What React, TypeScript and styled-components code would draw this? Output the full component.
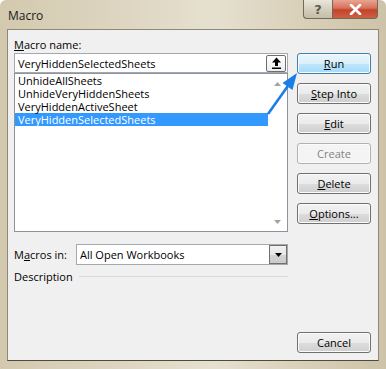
import styled, { createGlobalStyle, css } from "styled-components";

const GlobalStyle = createGlobalStyle`
  html, body {
    margin: 0;
    padding: 0;
    background: #ffffff;
  }
  body {
    font-family: "Open Sans", "Noto Sans", sans-serif;
    font-size: 11px;
    color: #000;
  }
`;

const macros = [
  "UnhideAllSheets",
  "UnhideVeryHiddenSheets",
  "VeryHiddenActiveSheet",
  "VeryHiddenSelectedSheets",
];

const buttons = [
  { label: "Run", key: "R", primary: true },
  { label: "Step Into", key: "S" },
  { label: "Edit", key: "E" },
  { label: "Create", disabled: true },
  { label: "Delete", key: "D" },
  { label: "Options...", key: "O" },
];

function Mnemonic({ text, mark }: { text: string; mark?: string }) {
  if (!mark) return <>{text}</>;
  const i = text.indexOf(mark);
  return (
    <>
      {text.slice(0, i)}
      <u>{text[i]}</u>
      {text.slice(i + 1)}
    </>
  );
}

function App() {
  return (
    <>
      <GlobalStyle />
      <Window>
        <TitleBar>
          <Title>Macro</Title>
          <Controls>
            <HelpButton>?</HelpButton>
            <CloseButton>
              <svg width="13" height="11" viewBox="0 0 13 11">
                <path d="M2 1 L11 10 M11 1 L2 10" stroke="#fff" strokeWidth="2.6" strokeLinecap="round" />
              </svg>
            </CloseButton>
          </Controls>
        </TitleBar>
        <Client>
          <LeftCol>
            <Label>
              <Mnemonic text="Macro name:" mark="M" />
            </Label>
            <NameInput>
              <span>VeryHiddenSelectedSheets</span>
              <CollapseButton>
                <svg width="11" height="12" viewBox="0 0 11 12">
                  <path d="M5.5 0.5 L10 5.5 H7 V9 H4 V5.5 H1 Z" fill="#000" />
                  <rect x="1" y="10.5" width="9" height="1.5" fill="#000" />
                </svg>
              </CollapseButton>
            </NameInput>
            <ListBox>
              <Items>
                {macros.map((m, i) => (
                  <Item key={m} selected={i === macros.length - 1}>
                    {m}
                  </Item>
                ))}
              </Items>
              <ScrollTrack>
                <svg width="7" height="4" viewBox="0 0 7 4">
                  <path d="M0 4 L3.5 0 L7 4 Z" fill="#a3a3a3" />
                </svg>
                <svg width="7" height="4" viewBox="0 0 7 4">
                  <path d="M0 0 L3.5 4 L7 0 Z" fill="#a3a3a3" />
                </svg>
              </ScrollTrack>
            </ListBox>
            <MacrosRow>
              <Label>
                <Mnemonic text="Macros in:" mark="a" />
              </Label>
              <Combo>
                <span>All Open Workbooks</span>
                <DropButton>
                  <svg width="7" height="4" viewBox="0 0 7 4">
                    <path d="M0 0 L3.5 4 L7 0 Z" fill="#000" />
                  </svg>
                </DropButton>
              </Combo>
            </MacrosRow>
            <DescriptionRow>
              <Label>Description</Label>
              <Rule />
            </DescriptionRow>
          </LeftCol>
          <RightCol>
            {buttons.map((b) => (
              <Button key={b.label} primary={b.primary} disabled={b.disabled}>
                <Mnemonic text={b.label} mark={b.key} />
              </Button>
            ))}
            <Button style={{ marginTop: "auto" }}>Cancel</Button>
          </RightCol>
        </Client>
        <Pointer width="386" height="369" viewBox="0 0 386 369">
          <path d="M268 114 L290 83" stroke="#1b7ee6" strokeWidth="2.6" />
          <path d="M297 73 L292.5 90 L282.5 83 Z" fill="#1b7ee6" />
        </Pointer>
      </Window>
    </>
  );
}

export default App;

const Window = styled.div`
  position: relative;
  width: 386px;
  height: 369px;
  box-sizing: border-box;
  display: flex;
  flex-direction: column;
  background: linear-gradient(90deg, #d2c9ae 0%, #ddd5c0 30%, #e6e0d0 55%, #d8cfb7 80%, #cdc3a8 100%);
  border-radius: 6px 6px 0 0;
  padding: 0 7px 8px 7px;
`;

const TitleBar = styled.div`
  height: 29px;
  display: flex;
  align-items: flex-start;
  justify-content: space-between;
  margin: 0 1px 0 1px;
`;

const Title = styled.div`
  font-family: "Open Sans", "Noto Sans", sans-serif;
  font-size: 12px;
  color: #1a1a1a;
  padding-top: 7px;
`;

const Controls = styled.div`
  display: flex;
`;

const ctrlBase = css`
  height: 19px;
  box-sizing: border-box;
  display: flex;
  align-items: center;
  justify-content: center;
  border: 1px solid #6f6a5c;
  border-top: none;
`;

const HelpButton = styled.div`
  ${ctrlBase};
  width: 29px;
  border-radius: 0 0 0 4px;
  border-right: none;
  background: linear-gradient(180deg, #ebe6da 0%, #d6cfbe 50%, #c5bda8 100%);
  color: #5d5a52;
  font-family: "DejaVu Sans", sans-serif;
  font-weight: bold;
  font-size: 13px;
`;

const CloseButton = styled.div`
  ${ctrlBase};
  width: 46px;
  border-radius: 0 0 4px 0;
  background: linear-gradient(180deg, #e8a592 0%, #d8715a 45%, #c3432a 55%, #cf5f44 100%);
`;

const Client = styled.div`
  flex: 1;
  display: flex;
  gap: 9px;
  background: #f0f0f0;
  border: 1px solid #8e8879;
  border-bottom-color: #4f4a40;
  padding: 7px 6px 7px 6px;
`;

const LeftCol = styled.div`
  width: 274px;
  display: flex;
  flex-direction: column;
`;

const Label = styled.div`
  line-height: 15px;
  white-space: nowrap;
  u {
    text-decoration-thickness: 1px;
  }
`;

const fieldBorder = css`
  box-sizing: border-box;
  border: 1px solid #a4a9b0;
  background: #fff;
`;

const NameInput = styled.div`
  ${fieldBorder};
  margin-top: 1px;
  height: 20px;
  display: flex;
  align-items: center;
  justify-content: space-between;
  padding: 0 1px 0 3px;
`;

const CollapseButton = styled.div`
  width: 20px;
  height: 17px;
  box-sizing: border-box;
  border: 1px solid #6e6e6e;
  border-radius: 2px;
  background: linear-gradient(180deg, #ffffff, #ececec);
  display: flex;
  align-items: center;
  justify-content: center;
`;

const ListBox = styled.div`
  ${fieldBorder};
  border-color: #8e949b;
  height: 159px;
  display: flex;
`;

const Items = styled.div`
  flex: 1;
`;

const Item = styled.div<{ selected?: boolean }>`
  height: 13px;
  line-height: 13px;
  padding-left: 3px;
  white-space: nowrap;
  background: ${(p) => (p.selected ? "#3399ff" : "transparent")};
  color: ${(p) => (p.selected ? "#fff" : "#000")};
`;

const ScrollTrack = styled.div`
  width: 19px;
  display: flex;
  flex-direction: column;
  align-items: center;
  justify-content: space-between;
  padding: 8px 0 7px 0;
`;

const MacrosRow = styled.div`
  margin-top: 12px;
  display: flex;
  align-items: center;
  justify-content: space-between;
`;

const Combo = styled.div`
  ${fieldBorder};
  width: 212px;
  height: 21px;
  display: flex;
  align-items: center;
  justify-content: space-between;
  padding: 0 0 0 3px;
`;

const DropButton = styled.div`
  width: 18px;
  height: 19px;
  box-sizing: border-box;
  border: 1px solid #707070;
  background: linear-gradient(180deg, #f2f2f2 0%, #e6e6e6 50%, #d5d5d5 51%, #cacaca 100%);
  display: flex;
  align-items: center;
  justify-content: center;
`;

const DescriptionRow = styled.div`
  margin-top: 4px;
  display: flex;
  align-items: center;
  gap: 6px;
`;

const Rule = styled.div`
  flex: 1;
  height: 1px;
  background: #d5dbe0;
  margin-top: -1px;
`;

const RightCol = styled.div`
  width: 74px;
  display: flex;
  flex-direction: column;
  gap: 9px;
  padding-top: 16px;
`;

const Button = styled.div<{ primary?: boolean; disabled?: boolean }>`
  height: 21px;
  box-sizing: border-box;
  display: flex;
  align-items: center;
  justify-content: center;
  border: 1px solid #707070;
  border-radius: 3px;
  box-shadow: inset 0 0 0 1px #fbfbfb;
  background: linear-gradient(180deg, #f2f2f2 0%, #ebebeb 50%, #dddddd 51%, #cfcfcf 100%);
  color: #000;
  ${(p) =>
    p.primary &&
    css`
      border-color: #3c7fb1;
      background: linear-gradient(180deg, #eaf6fd 0%, #d9f0fc 50%, #bee6fd 51%, #a7d9f5 100%);
    `}
  ${(p) =>
    p.disabled &&
    css`
      border-color: #adb2b5;
      background: #f4f4f4;
      color: #838383;
    `}
`;

const Pointer = styled.svg`
  position: absolute;
  left: 0;
  top: 0;
  pointer-events: none;
`;
